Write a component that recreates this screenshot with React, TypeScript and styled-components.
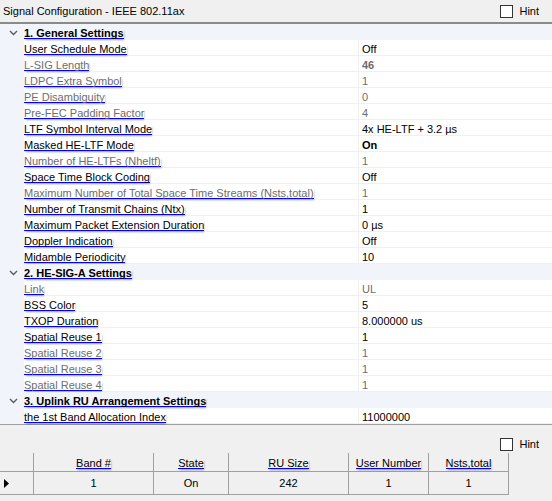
import React from "react";
import styled, { createGlobalStyle } from "styled-components";

const Global = createGlobalStyle`
  html, body { margin: 0; padding: 0; background: #f0f0f0; }
  body { font-family: "Liberation Sans", Arial, sans-serif; font-size: 11px; color: #000; }
`;

const Window = styled.div`
  width: 552px;
  height: 501px;
  display: flex;
  flex-direction: column;
  background: #f0f0f0;
  overflow: hidden;
`;

const TitleBar = styled.div`
  flex-shrink: 0;
  height: 22px;
  display: flex;
  align-items: center;
  justify-content: space-between;
  padding: 0 13px 0 3px;
  border-bottom: 2px solid #8a8a8a;
  background: #f0f0f0;
`;

const Title = styled.span`
  font-size: 11px;
  color: #000;
`;

const HintLabel = styled.label`
  display: flex;
  align-items: center;
  gap: 6px;
  font-size: 11px;
  color: #000;
`;

const Box = styled.span`
  width: 11px;
  height: 11px;
  border: 1px solid #333;
  background: #fff;
  display: inline-block;
`;

const Grid = styled.div`
  flex-shrink: 0;
  height: 400px;
  background: #fff;
  border-bottom: 1px solid #a0a0a0;
  display: flex;
  flex-direction: column;
`;

const CategoryRow = styled.div`
  flex-shrink: 0;
  height: 16px;
  display: grid;
  grid-template-columns: 24px 1fr;
  background: #f1f4fa;
`;

const Chevron = styled.div`
  display: flex;
  justify-content: center;
  padding-top: 6px;
  padding-left: 3px;
`;

const Row = styled.div`
  flex-shrink: 0;
  height: 16px;
  display: grid;
  grid-template-columns: 24px 335px 1fr;
`;

const Gutter = styled.div`
  background: #f1f4fa;
`;

const NameCell = styled.div`
  border-bottom: 1px solid #f0f0f0;
  border-right: 1px solid #f0f0f0;
  padding-top: 3px;
  overflow: visible;
  white-space: nowrap;
`;

const ValueCell = styled.div<{ $dim?: boolean; $bold?: boolean }>`
  border-bottom: 1px solid #f0f0f0;
  padding: 4px 0 0 3px;
  line-height: 10px;
  white-space: nowrap;
  color: ${(p) => (p.$dim ? "#6d6d6d" : "#000")};
  font-weight: ${(p) => (p.$bold ? "bold" : "normal")};
`;

const Link = styled.span<{ $dim?: boolean; $bold?: boolean }>`
  display: inline-block;
  line-height: 10px;
  border-bottom: 1px solid #0000ff;
  box-shadow: 1px 2px 2px -1px rgba(0, 0, 0, 0.35);
  color: ${(p) => (p.$dim ? "#6d6d6d" : "#000")};
  font-weight: ${(p) => (p.$bold ? "bold" : "normal")};
  white-space: nowrap;
`;

const CategoryTitle = styled.div`
  padding-top: 3px;
`;

const Panel = styled.div`
  flex: 1;
  display: flex;
  flex-direction: column;
  background: #f0f0f0;
`;

const HintRow = styled.div`
  display: flex;
  justify-content: flex-end;
  padding: 10px 13px 0 0;
  height: 18px;
`;

const Table = styled.div`
  width: 509px;
  display: grid;
  grid-template-columns: 34px 120px 75px 120px 80px 80px;
`;

const HeadCell = styled.div`
  box-sizing: border-box;
  height: 19px;
  border-right: 1px solid #a0a0a0;
  border-bottom: 1px solid #a0a0a0;
  display: flex;
  align-items: flex-end;
  justify-content: center;
  padding-bottom: 2px;
`;

const DataCell = styled.div`
  height: 23px;
  box-sizing: border-box;
  border-right: 1px solid #a0a0a0;
  border-bottom: 1px solid #a0a0a0;
  display: flex;
  align-items: center;
  justify-content: center;
  color: #000;
`;

const RowHeadCell = styled(DataCell)`
  justify-content: flex-start;
  padding-left: 4px;
`;

type Item = { name: string; value: string; on: boolean; bold?: boolean };
type Section = { title: string; items: Item[] };

const sections: Section[] = [
  {
    title: "1. General Settings",
    items: [
      { name: "User Schedule Mode", value: "Off", on: true },
      { name: "L-SIG Length", value: "46", on: false, bold: true },
      { name: "LDPC Extra Symbol", value: "1", on: false },
      { name: "PE Disambiguity", value: "0", on: false },
      { name: "Pre-FEC Padding Factor", value: "4", on: false },
      { name: "LTF Symbol Interval Mode", value: "4x HE-LTF + 3.2 µs", on: true },
      { name: "Masked HE-LTF Mode", value: "On", on: true, bold: true },
      { name: "Number of HE-LTFs (Nheltf)", value: "1", on: false },
      { name: "Space Time Block Coding", value: "Off", on: true },
      { name: "Maximum Number of Total Space Time Streams (Nsts,total)", value: "1", on: false },
      { name: "Number of Transmit Chains (Ntx)", value: "1", on: true },
      { name: "Maximum Packet Extension Duration", value: "0 µs", on: true },
      { name: "Doppler Indication", value: "Off", on: true },
      { name: "Midamble Periodicity", value: "10", on: true },
    ],
  },
  {
    title: "2. HE-SIG-A Settings",
    items: [
      { name: "Link", value: "UL", on: false },
      { name: "BSS Color", value: "5", on: true },
      { name: "TXOP Duration", value: "8.000000 us", on: true },
      { name: "Spatial Reuse 1", value: "1", on: true },
      { name: "Spatial Reuse 2", value: "1", on: false },
      { name: "Spatial Reuse 3", value: "1", on: false },
      { name: "Spatial Reuse 4", value: "1", on: false },
    ],
  },
  {
    title: "3. Uplink RU Arrangement Settings",
    items: [{ name: "the 1st Band Allocation Index", value: "11000000", on: true }],
  },
];

const headers = ["Band #", "State", "RU Size", "User Number", "Nsts,total"];
const dataRow = ["1", "On", "242", "1", "1"];

const Hint = () => (
  <HintLabel>
    <Box />
    Hint
  </HintLabel>
);

export default function App() {
  return (
    <>
      <Global />
      <Window>
        <TitleBar>
          <Title>Signal Configuration - IEEE 802.11ax</Title>
          <Hint />
        </TitleBar>
        <Grid>
          {sections.map((s) => (
            <React.Fragment key={s.title}>
              <CategoryRow>
                <Chevron>
                  <svg width="9" height="6" viewBox="0 0 9 6">
                    <polyline points="1,1 4.5,4.5 8,1" fill="none" stroke="#5a5a5a" strokeWidth="1.4" />
                  </svg>
                </Chevron>
                <CategoryTitle>
                  <Link $bold>{s.title}</Link>
                </CategoryTitle>
              </CategoryRow>
              {s.items.map((it) => (
                <Row key={it.name}>
                  <Gutter />
                  <NameCell>
                    <Link $dim={!it.on}>{it.name}</Link>
                  </NameCell>
                  <ValueCell $dim={!it.on} $bold={it.bold}>
                    {it.value}
                  </ValueCell>
                </Row>
              ))}
            </React.Fragment>
          ))}
        </Grid>
        <Panel>
          <HintRow>
            <Hint />
          </HintRow>
          <Table>
            <HeadCell />
            {headers.map((h) => (
              <HeadCell key={h}>
                <Link>{h}</Link>
              </HeadCell>
            ))}
            <RowHeadCell>
              <svg width="5" height="9" viewBox="0 0 5 9">
                <polygon points="0,0 5,4.5 0,9" fill="#000" />
              </svg>
            </RowHeadCell>
            {dataRow.map((d, i) => (
              <DataCell key={i}>{d}</DataCell>
            ))}
          </Table>
        </Panel>
      </Window>
    </>
  );
}
